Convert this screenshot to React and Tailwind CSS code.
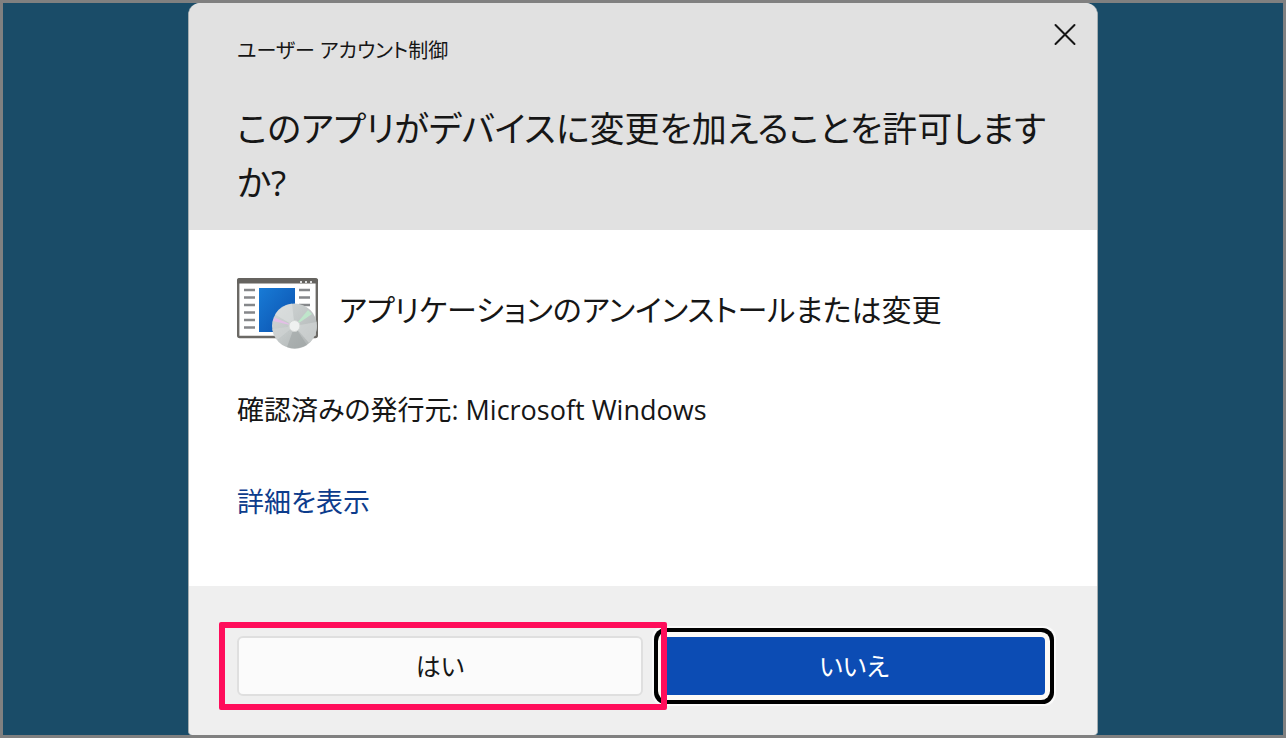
function AppIcon() {
  return (
    <svg className="h-[72px] w-[82px] shrink-0" viewBox="0 0 82 72" aria-hidden="true">
      <defs>
        <linearGradient id="blue" x1="0" y1="0" x2="1" y2="1">
          <stop offset="0" stopColor="#187bd6" />
          <stop offset="1" stopColor="#0b50ad" />
        </linearGradient>
        <linearGradient id="disc" x1="0" y1="0" x2="1" y2="1">
          <stop offset="0" stopColor="#d3d7d7" />
          <stop offset="0.5" stopColor="#c2c7c7" />
          <stop offset="1" stopColor="#a9aeae" />
        </linearGradient>
      </defs>
      <rect x="1.2" y="1.500" width="78.6" height="57.500" rx="1.500" fill="#fff" stroke="#6b6965" strokeWidth="2.4" />
      <path d="M0 2.2Q0 0 2 0H78Q81 0 81 2.2V5.500H0Z" fill="#65635f" />
      <path d="M63 4h2M68 4h2M73 4h2" stroke="#ddd" strokeWidth="1.800" />
      <path
        d="M7 12h11M7 19.500h11M7 27h11M7 34.500h11M7 42h11M7 49.500h11M62 12h11M62 19.500h11M62 27h11"
        stroke="#85878a"
        strokeWidth="2.6"
      />
      <rect x="22" y="10" width="36" height="44" fill="url(#blue)" />
      <circle cx="57.500" cy="48" r="22.500" fill="url(#disc)" />
      <path d="M57.500 48L38 36.500A22.500 22.500 0 0 1 55 25.600Z" fill="#dfe3e2" opacity="0.6" />
      <path d="M57.500 48L79.500 44A22.500 22.500 0 0 1 72 65Z" fill="#d6d9d8" opacity="0.6" />
      <path d="M57.500 48L70 67A22.500 22.500 0 0 1 50 69.200Z" fill="#979d9d" opacity="0.5" />
      <path d="M57.500 48L40 62A22.500 22.500 0 0 1 35.200 51Z" fill="#d2d6d5" opacity="0.6" />
      <path d="M57.500 48L37.500 39.500L36 43Z" fill="#e3bfe6" />
      <path d="M57.500 48L71 32L75 36Z" fill="#bfe6cb" />
      <circle cx="57.500" cy="48" r="5.500" fill="#eff1f0" stroke="#d3d6d5" />
    </svg>
  );
}

export default function App() {
  return (
    <div className="flex min-h-screen flex-col border-3 border-[#808080] bg-[#1a4c68] font-['Open_Sans','Noto_Sans_CJK_JP',sans-serif] text-[#161616] [font-feature-settings:'palt']">
      <main
        role="dialog"
        aria-labelledby="uac-question"
        className="mx-auto flex w-full max-w-[910px] flex-1 flex-col rounded-t-xl rounded-b-sm border-x border-[#a5adb0] bg-[#efefef]"
      >
        <header className="rounded-t-xl bg-[#e1e1e1] px-12 pt-8 pb-5">
          <div className="flex items-start justify-between">
            <p className="text-[20px] leading-8">ユーザー アカウント制御</p>
            <button type="button" aria-label="閉じる" className="-mt-6 -mr-10 p-2">
              <svg className="size-8" viewBox="0 0 32 32" fill="none" stroke="#161616" strokeWidth="2" strokeLinecap="round">
                <path d="M6.500 6L25.500 25M25.500 6L6.500 25" />
              </svg>
            </button>
          </div>
          <h1 id="uac-question" className="mt-[35px] text-[35px] leading-[54px]">
            このアプリがデバイスに変更を加えることを許可しますか?
          </h1>
        </header>

        <section className="bg-white px-12 pt-12 pb-16">
          <div className="flex items-start gap-5">
            <AppIcon />
            <h2 className="text-[30px] leading-[64px]">アプリケーションのアンインストールまたは変更</h2>
          </div>
          <p className="mt-10 text-[27px] leading-10">確認済みの発行元: Microsoft Windows</p>
          <a href="#details" className="mt-13 inline-block text-[27px] leading-10 text-[#0c3c8c]">
            詳細を表示
          </a>
        </section>

        <footer className="grid grid-cols-[406fr_382fr] gap-5 pt-[50px] pr-[52px] pb-8 pl-12 text-[25px] leading-10">
          <div className="relative z-10">
            <button type="button" className="block h-[60px] w-full rounded-md border-2 border-[#dfdfdf] bg-[#fbfbfb]">
              はい
            </button>
            <div className="pointer-events-none absolute -top-[14px] -right-6 -bottom-[14px] -left-[18px] rounded-xs border-6 border-[#ff0d5b]" />
          </div>
          <button
            type="button"
            className="my-px h-[58px] rounded-sm bg-[#0c4cb4] text-white shadow-[0_0_0_5px_#fdfaf6,0_0_0_9px_#000,0_0_0_11px_#fafafa]"
          >
            いいえ
          </button>
        </footer>
      </main>
    </div>
  );
}
